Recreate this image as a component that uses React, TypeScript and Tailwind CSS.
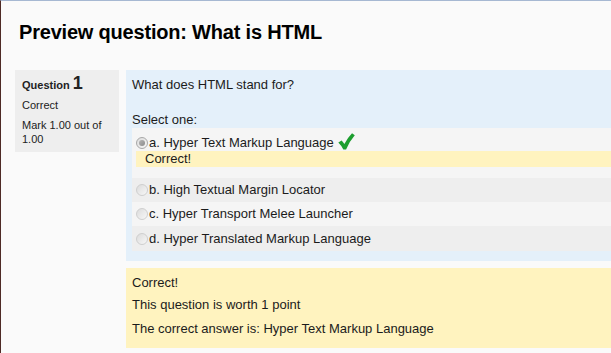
import React from "react";

function Radio({ checked }: { checked?: boolean }) {
  return (
    <span
      className={`shrink-0 flex items-center justify-center w-[12px] h-[12px] rounded-full border ${
        checked ? "border-[#a8a8a8]" : "border-[#cfcfcf]"
      } bg-gradient-to-br from-[#dcdcdc] to-[#f7f7f7]`}
    >
      {checked && <span className="w-[6px] h-[6px] rounded-full bg-gradient-to-br from-[#b5b5b5] to-[#8c8c8c]" />}
    </span>
  );
}

function Tick() {
  return (
    <svg width="17" height="17" viewBox="0 0 16 16" className="ml-[4px] -mt-[3px] shrink-0">
      <path
        d="M0.3 9 L3.4 7 Q4.9 8.6 6 10.4 Q8.8 4.8 13.2 0.3 L15.8 2 Q10.8 7.6 7.6 15.6 L5 15.6 Q3.2 11.8 0.3 9 Z"
        fill="#1c9e2e"
      />
    </svg>
  );
}

const answers = [
  { key: "b", label: "b. High Textual Margin Locator", bg: "bg-[#eeeeee]", h: "h-[24px]" },
  { key: "c", label: "c. Hyper Transport Melee Launcher", bg: "bg-[#f5f5f5]", h: "h-[24px]" },
  { key: "d", label: "d. Hyper Translated Markup Language", bg: "bg-[#eeeeee]", h: "h-[25px]" },
];

export default function App() {
  return (
    <div className="w-[611px] h-[353px] overflow-hidden bg-[#fafafa] border-l border-l-[#4e2a25] border-t border-t-[#a6b8d2] font-['Liberation_Sans',Arial,sans-serif] text-[13px] leading-[16px] text-[#1b1b1b]">
      {/* Heading */}
      <div className="h-[69px] pl-[18px] pt-[19px]">
        <h2 className="text-[20px] leading-[24px] font-bold tracking-[-0.2px] text-black whitespace-nowrap">
          Preview question: What is HTML
        </h2>
      </div>

      <div className="flex items-start pl-[14px] gap-[7px]">
        {/* Info */}
        <div className="w-[104px] h-[82px] shrink-0 bg-[#eeeeee] px-[7px] pt-[6px] text-[11px] leading-[14px] text-[#222]">
          <div className="flex items-baseline h-[20px]">
            <span className="font-bold">Question</span>
            <span className="font-bold text-[18px] ml-[3px]">1</span>
          </div>
          <div className="mt-[2px]">Correct</div>
          <div className="mt-[6px]">Mark 1.00 out of 1.00</div>
        </div>

        {/* Main */}
        <div className="flex-1 flex flex-col">
          <div className="bg-[#e4f0fa] pl-[6px] pt-[7px] pb-[10px]">
            <div className="leading-[15px]">What does HTML stand for?</div>
            <div className="mt-[20px] leading-[15px]">Select one:</div>
            <div className="mt-[1px]">
              <div className="bg-[#f5f5f5] pl-[4px] pt-[7px] pb-[11px]">
                <div className="flex items-center h-[16px]">
                  <Radio checked />
                  <span className="ml-[1px]">a. Hyper Text Markup Language</span>
                  <Tick />
                </div>
                <div className="bg-[#fff3bf] h-[16px] pl-[9px]">Correct!</div>
              </div>
              {answers.map((a) => (
                <div key={a.key} className={`flex items-center pl-[4px] ${a.bg} ${a.h}`}>
                  <Radio />
                  <span className="ml-[1px]">{a.label}</span>
                </div>
              ))}
            </div>
          </div>

          <div className="mt-[7px] bg-[#fff3bf] pl-[6px] pt-[7px] pb-[12px] leading-[15px]">
            <div>Correct!</div>
            <div className="mt-[7px]">This question is worth 1 point</div>
            <div className="mt-[9px]">The correct answer is: Hyper Text Markup Language</div>
          </div>
        </div>
      </div>
    </div>
  );
}
